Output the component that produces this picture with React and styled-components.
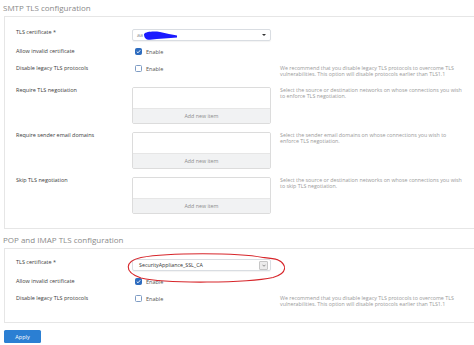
import React from 'react'
import styled, { createGlobalStyle } from 'styled-components'

const Global = createGlobalStyle`
  html, body {
    margin: 0;
    background: #fff;
    overflow: hidden;
  }
  body {
    font-family: "Open Sans", "Noto Sans", sans-serif;
  }
`

const Page = styled.div`
  width: 474px;
  height: 345px;
  padding-left: 4px;
  box-sizing: border-box;
  overflow: hidden;
`

const Title = styled.h2`
  margin: ${p => p.$top || 0}px 0 0 -1px;
  height: 16px;
  line-height: 16px;
  font-size: 8px;
  font-weight: 400;
  color: #8a8a8a;
`

const Panel = styled.section`
  width: calc(100% + 4px);
  border: 1px solid #e6e6e6;
  border-right: none;
  box-sizing: border-box;
  padding: ${p => p.$top}px 0 14px 11px;
`

const Row = styled.div`
  display: grid;
  grid-template-columns: 116px 139px 1fr;
  align-items: start;
  margin-top: ${p => p.$top || 0}px;
`

const Label = styled.div`
  font-size: 5.5px;
  line-height: 7px;
  color: #3c3c3c;
`

const Help = styled.div`
  font-size: 5.3px;
  line-height: 6.8px;
  color: #9a9a9a;
  padding-left: 9px;
  margin-top: -0.5px;
  white-space: nowrap;
`

const Select = styled.div`
  position: relative;
  height: 12px;
  border: 1px solid #d9dde2;
  border-radius: 2px;
  box-sizing: border-box;
  box-shadow: 0 1px 1px rgba(0, 0, 0, 0.05);
  display: flex;
  align-items: center;
  padding: 0 ${p => (p.$boxed ? '2px' : '4px')} 0 ${p => (p.$boxed ? '6px' : '4px')};
  font-size: 5.3px;
  color: #444;
`

const SelectText = styled.span`
  flex: 1;
  display: flex;
  align-items: center;
  color: ${p => (p.$muted ? '#8a8a8a' : '#333')};
`

const Caret = styled.span`
  width: 0;
  height: 0;
  border-left: 2px solid transparent;
  border-right: 2px solid transparent;
  border-top: 2.5px solid #333;
`

const CaretBox = styled.span`
  width: 7px;
  height: 7px;
  border: 1px solid #c6c6c6;
  background: #ececec;
  border-radius: 1px;
  display: flex;
  align-items: center;
  justify-content: center;
`

const CheckLine = styled.label`
  display: flex;
  align-items: center;
  height: 7px;
  padding-left: 3px;
  font-size: 5.5px;
  color: #555;
`

const Box = styled.span`
  width: 7px;
  height: 7px;
  box-sizing: border-box;
  border-radius: 1.5px;
  margin-right: 4px;
  display: flex;
  align-items: center;
  justify-content: center;
  background: ${p => (p.$checked ? '#2d6cbf' : '#fff')};
  border: 1px solid ${p => (p.$checked ? '#2d6cbf' : '#7e9cc4')};
`

const List = styled.div`
  height: 37px;
  border: 1px solid #dcdcdc;
  border-radius: 2px;
  box-sizing: border-box;
  display: flex;
  flex-direction: column;
  overflow: hidden;
`

const ListBody = styled.div`
  flex: 1;
  background: #fff;
`

const AddItem = styled.div`
  height: 14px;
  background: #f1f2f3;
  border-top: 1px solid #e6e6e6;
  display: flex;
  align-items: center;
  justify-content: center;
  font-size: 5.3px;
  color: #8c8c8c;
`

const Annotation = styled.svg`
  position: absolute;
  left: -8px;
  top: -8px;
  pointer-events: none;
  overflow: visible;
`

const Button = styled.button`
  display: block;
  margin-top: 7px;
  width: 37px;
  height: 13px;
  border: none;
  border-radius: 1.5px;
  background: #2b7fd3;
  color: #fff;
  font-family: inherit;
  font-size: 5.5px;
  padding: 0;
`

const Check = ({ checked }) => (
  <CheckLine>
    <Box $checked={checked}>
      {checked && (
        <svg width="5" height="5" viewBox="0 0 10 10">
          <path d="M1.5 5.2 L4 7.6 L8.6 2.4" stroke="#fff" strokeWidth="1.8" fill="none" />
        </svg>
      )}
    </Box>
    Enable
  </CheckLine>
)

const ListBox = () => (
  <List>
    <ListBody />
    <AddItem>Add new item</AddItem>
  </List>
)

const legacyHelp = (
  <Help>
    We recommend that you disable legacy TLS protocols to overcome TLS<br />
    vulnerabilities. This option will disable protocols earlier than TLS1.1
  </Help>
)

const App = () => (
  <Page>
    <Global />
    <Title>SMTP TLS configuration</Title>
    <Panel $top={12}>
      <Row>
        <Label>TLS certificate *</Label>
        <Select>
          <SelectText $muted>
            aa
            <svg width="33" height="9" viewBox="0 0 33 9" style={{ marginLeft: 1 }}>
              <path d="M0 3 C2 0.5 10 0 16 1 C22 2.5 28 3.5 33 4.6 L33 6.6 C25 7.4 15 7.6 6 8.8 C2 9 0 7 0 3 Z" fill="#1a1aff" />
            </svg>
          </SelectText>
          <Caret />
        </Select>
      </Row>
      <Row $top={7}>
        <Label>Allow invalid certificate</Label>
        <Check checked />
      </Row>
      <Row $top={10}>
        <Label>Disable legacy TLS protocols</Label>
        <Check />
        {legacyHelp}
      </Row>
      <Row $top={9}>
        <Label>Require TLS negotiation</Label>
        <ListBox />
        <Help>
          Select the source or destination networks on whose connections you wish<br />
          to enforce TLS negotiation.
        </Help>
      </Row>
      <Row $top={8}>
        <Label>Require sender email domains</Label>
        <ListBox />
        <Help>
          Select the sender email domains on whose connections you wish to<br />
          enforce TLS negotiation.
        </Help>
      </Row>
      <Row $top={8}>
        <Label>Skip TLS negotiation</Label>
        <ListBox />
        <Help>
          Select the source or destination networks on whose connections you wish<br />
          to skip TLS negotiation.
        </Help>
      </Row>
    </Panel>

    <Title $top={3}>POP and IMAP TLS configuration</Title>
    <Panel $top={10}>
      <Row>
        <Label>TLS certificate *</Label>
        <Select $boxed>
          <SelectText>SecurityAppliance_SSL_CA</SelectText>
          <CaretBox>
            <svg width="4" height="3" viewBox="0 0 8 6">
              <path d="M1 1.5 L4 4.5 L7 1.5" stroke="#666" strokeWidth="1.4" fill="none" />
            </svg>
          </CaretBox>
          <Annotation width="165" height="32" viewBox="124 251 165 32">
            <path
              d="M262 256.5 C236 251.5 168 251.5 140 256.5 C124 260 122 271 140 277 C166 283 246 282 272 276.5 C287 272.5 286 263.5 277 259 C272 257 266 256.8 262 256.5 M276 258.5 C279 259.5 281 261 282 263"
              stroke="#d7262b"
              strokeWidth="1.1"
              fill="none"
              strokeLinecap="round"
            />
          </Annotation>
        </Select>
      </Row>
      <Row $top={7}>
        <Label>Allow invalid certificate</Label>
        <Check checked />
      </Row>
      <Row $top={10}>
        <Label>Disable legacy TLS protocols</Label>
        <Check />
        {legacyHelp}
      </Row>
    </Panel>
    <Button>Apply</Button>
  </Page>
)

export default App
